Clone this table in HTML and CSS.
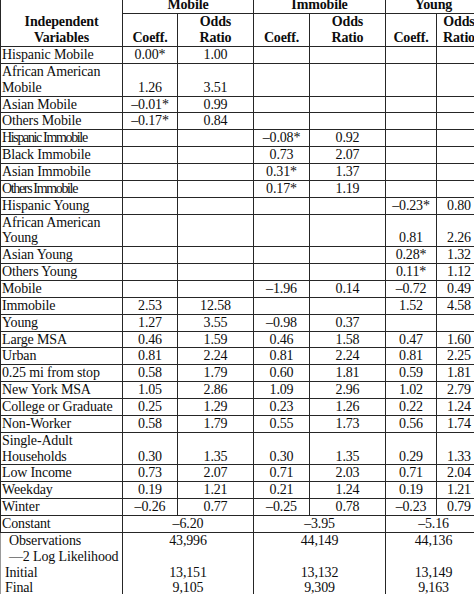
FILE: index.html
```html
<!DOCTYPE html>
<html>
<head>
<meta charset="utf-8">
<link rel="stylesheet" href="styles.css">
</head>
<body>
<table class="tbl">
  <colgroup>
    <col class="c-var"><col class="c-mc"><col class="c-mo"><col class="c-ic"><col class="c-io"><col class="c-yc"><col class="c-yo">
  </colgroup>
  <thead>
    <tr>
      <th rowspan="2" class="h-var">Independent<br>Variables</th>
      <th colspan="2">Mobile</th>
      <th colspan="2">Immobile</th>
      <th colspan="2">Young</th>
    </tr>
    <tr>
      <th>Coeff.</th><th>Odds<br>Ratio</th>
      <th>Coeff.</th><th>Odds<br>Ratio</th>
      <th>Coeff.</th><th>Odds<br>Ratio</th>
    </tr>
  </thead>
  <tbody>
    <tr><td class="lbl">Hispanic Mobile</td><td>0.00*</td><td>1.00</td><td></td><td></td><td></td><td></td></tr>
    <tr><td class="lbl">African American<br>Mobile</td><td>1.26</td><td>3.51</td><td></td><td></td><td></td><td></td></tr>
    <tr><td class="lbl">Asian Mobile</td><td>–0.01*</td><td>0.99</td><td></td><td></td><td></td><td></td></tr>
    <tr><td class="lbl">Others Mobile</td><td>–0.17*</td><td>0.84</td><td></td><td></td><td></td><td></td></tr>
    <tr><td class="lbl tight">Hispanic Immobile</td><td></td><td></td><td>–0.08*</td><td>0.92</td><td></td><td></td></tr>
    <tr><td class="lbl">Black Immobile</td><td></td><td></td><td>0.73</td><td>2.07</td><td></td><td></td></tr>
    <tr><td class="lbl">Asian Immobile</td><td></td><td></td><td>0.31*</td><td>1.37</td><td></td><td></td></tr>
    <tr><td class="lbl tight">Others Immobile</td><td></td><td></td><td>0.17*</td><td>1.19</td><td></td><td></td></tr>
    <tr><td class="lbl">Hispanic Young</td><td></td><td></td><td></td><td></td><td>–0.23*</td><td>0.80</td></tr>
    <tr><td class="lbl">African American<br>Young</td><td></td><td></td><td></td><td></td><td>0.81</td><td>2.26</td></tr>
    <tr><td class="lbl">Asian Young</td><td></td><td></td><td></td><td></td><td>0.28*</td><td>1.32</td></tr>
    <tr><td class="lbl">Others Young</td><td></td><td></td><td></td><td></td><td>0.11*</td><td>1.12</td></tr>
    <tr><td class="lbl">Mobile</td><td></td><td></td><td>–1.96</td><td>0.14</td><td>–0.72</td><td>0.49</td></tr>
    <tr><td class="lbl">Immobile</td><td>2.53</td><td>12.58</td><td></td><td></td><td>1.52</td><td>4.58</td></tr>
    <tr><td class="lbl">Young</td><td>1.27</td><td>3.55</td><td>–0.98</td><td>0.37</td><td></td><td></td></tr>
    <tr><td class="lbl">Large MSA</td><td>0.46</td><td>1.59</td><td>0.46</td><td>1.58</td><td>0.47</td><td>1.60</td></tr>
    <tr><td class="lbl">Urban</td><td>0.81</td><td>2.24</td><td>0.81</td><td>2.24</td><td>0.81</td><td>2.25</td></tr>
    <tr><td class="lbl">0.25 mi from stop</td><td>0.58</td><td>1.79</td><td>0.60</td><td>1.81</td><td>0.59</td><td>1.81</td></tr>
    <tr><td class="lbl">New York MSA</td><td>1.05</td><td>2.86</td><td>1.09</td><td>2.96</td><td>1.02</td><td>2.79</td></tr>
    <tr><td class="lbl">College or Graduate</td><td>0.25</td><td>1.29</td><td>0.23</td><td>1.26</td><td>0.22</td><td>1.24</td></tr>
    <tr><td class="lbl">Non-Worker</td><td>0.58</td><td>1.79</td><td>0.55</td><td>1.73</td><td>0.56</td><td>1.74</td></tr>
    <tr><td class="lbl">Single-Adult<br>Households</td><td>0.30</td><td>1.35</td><td>0.30</td><td>1.35</td><td>0.29</td><td>1.33</td></tr>
    <tr><td class="lbl">Low Income</td><td>0.73</td><td>2.07</td><td>0.71</td><td>2.03</td><td>0.71</td><td>2.04</td></tr>
    <tr><td class="lbl">Weekday</td><td>0.19</td><td>1.21</td><td>0.21</td><td>1.24</td><td>0.19</td><td>1.21</td></tr>
    <tr><td class="lbl">Winter</td><td>–0.26</td><td>0.77</td><td>–0.25</td><td>0.78</td><td>–0.23</td><td>0.79</td></tr>
    <tr><td class="lbl">Constant</td><td colspan="2">–6.20</td><td colspan="2">–3.95</td><td colspan="2">–5.16</td></tr>
  </tbody>
  <tbody class="stats">
    <tr><td class="lbl ind2">Observations</td><td colspan="2" class="sl">43,996</td><td colspan="2">44,149</td><td colspan="2" class="sl">44,136</td></tr>
    <tr><td class="lbl ind2">—2 Log Likelihood</td><td colspan="2" class="sl"></td><td colspan="2"></td><td colspan="2" class="sl"></td></tr>
    <tr><td class="lbl ind1">Initial</td><td colspan="2" class="sl">13,151</td><td colspan="2">13,132</td><td colspan="2" class="sl">13,149</td></tr>
    <tr><td class="lbl ind1">Final</td><td colspan="2" class="sl">9,105</td><td colspan="2">9,309</td><td colspan="2" class="sl">9,163</td></tr>
  </tbody>
</table>
</body>
</html>
```

FILE: styles.css
```css
html, body {
  margin: 0;
  padding: 0;
  background: #ffffff;
  overflow: hidden;
}

.tbl {
  border-collapse: collapse;
  table-layout: fixed;
  width: 481px;
  margin-top: -3.6px;
  font-family: "Liberation Serif", "Times New Roman", serif;
  font-size: 14px;
  letter-spacing: -0.15px;
  line-height: 15.86px;
  color: #0d0d0d;
}

.c-var { width: 122px; }
.c-mc { width: 55px; }
.c-mo { width: 76px; }
.c-ic { width: 56px; }
.c-io { width: 76px; }
.c-yc { width: 51px; }
.c-yo { width: 45px; }

.tbl th,
.tbl td {
  border: 1px solid #262626;
  padding: 0;
  text-align: center;
  vertical-align: bottom;
  white-space: nowrap;
}

.tbl th {
  font-weight: bold;
}

.tbl td.lbl {
  text-align: left;
  padding-left: 1px;
}

.tbl td.tight {
  letter-spacing: -1.35px;
}

.stats td {
  border-top: none;
  border-bottom: none;
}

.stats tr:first-child td {
  border-top: 1px solid #262626;
}

.stats td.sl {
  border-left-color: #9a9a9a;
}

.stats td.lbl {
  border-left-color: #9a9a9a;
}

.tbl td.ind2 {
  padding-left: 8px;
}

.tbl td.ind1 {
  padding-left: 4px;
}
```
